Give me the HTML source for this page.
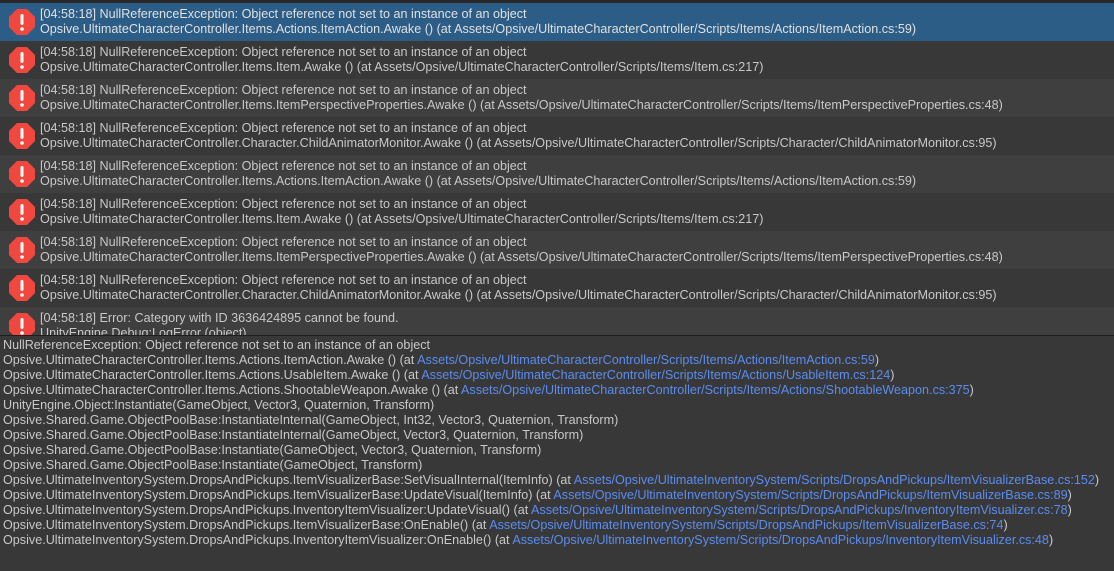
<!DOCTYPE html>
<html><head><style>
body{margin:0;width:1114px;height:571px;background:#383838;overflow:hidden;font-family:"Liberation Sans",sans-serif;font-size:12.6px;color:#c8c8c8}
.top{height:3px;background:#282828}
.row{position:relative;height:38px;}
.row.a{background:#383838}.row.b{background:#3f3f3f}.row.sel{background:#2c5d87;color:#e0e0e0}
.row svg{position:absolute;left:9px;top:6px}
.row .t{position:absolute;left:40px;top:4px;line-height:15px;white-space:nowrap}
.list{height:332px;overflow:hidden}
.div{height:1px;background:#1e1e1e}
.det{padding:2px 0 0 3px;line-height:15px;white-space:nowrap;background:#383838}
a{color:#5a8cf0;text-decoration:none}
</style></head><body>
<div class="top"></div>
<div class="list">
<div class="row sel"><svg width="26" height="26" viewBox="0 0 26 26"><polygon points="8,0 18,0 26,8 26,18 18,26 8,26 0,18 0,8" fill="#f0483e"/><rect x="11.5" y="5" width="3" height="11" rx="1.5" fill="#fff"/><circle cx="13" cy="20" r="1.8" fill="#fff"/></svg><div class="t">[04:58:18] NullReferenceException: Object reference not set to an instance of an object<br>Opsive.UltimateCharacterController.Items.Actions.ItemAction.Awake () (at Assets/Opsive/UltimateCharacterController/Scripts/Items/Actions/ItemAction.cs:59)</div></div>
<div class="row a"><svg width="26" height="26" viewBox="0 0 26 26"><polygon points="8,0 18,0 26,8 26,18 18,26 8,26 0,18 0,8" fill="#f0483e"/><rect x="11.5" y="5" width="3" height="11" rx="1.5" fill="#fff"/><circle cx="13" cy="20" r="1.8" fill="#fff"/></svg><div class="t">[04:58:18] NullReferenceException: Object reference not set to an instance of an object<br>Opsive.UltimateCharacterController.Items.Item.Awake () (at Assets/Opsive/UltimateCharacterController/Scripts/Items/Item.cs:217)</div></div>
<div class="row b"><svg width="26" height="26" viewBox="0 0 26 26"><polygon points="8,0 18,0 26,8 26,18 18,26 8,26 0,18 0,8" fill="#f0483e"/><rect x="11.5" y="5" width="3" height="11" rx="1.5" fill="#fff"/><circle cx="13" cy="20" r="1.8" fill="#fff"/></svg><div class="t">[04:58:18] NullReferenceException: Object reference not set to an instance of an object<br>Opsive.UltimateCharacterController.Items.ItemPerspectiveProperties.Awake () (at Assets/Opsive/UltimateCharacterController/Scripts/Items/ItemPerspectiveProperties.cs:48)</div></div>
<div class="row a"><svg width="26" height="26" viewBox="0 0 26 26"><polygon points="8,0 18,0 26,8 26,18 18,26 8,26 0,18 0,8" fill="#f0483e"/><rect x="11.5" y="5" width="3" height="11" rx="1.5" fill="#fff"/><circle cx="13" cy="20" r="1.8" fill="#fff"/></svg><div class="t">[04:58:18] NullReferenceException: Object reference not set to an instance of an object<br>Opsive.UltimateCharacterController.Character.ChildAnimatorMonitor.Awake () (at Assets/Opsive/UltimateCharacterController/Scripts/Character/ChildAnimatorMonitor.cs:95)</div></div>
<div class="row b"><svg width="26" height="26" viewBox="0 0 26 26"><polygon points="8,0 18,0 26,8 26,18 18,26 8,26 0,18 0,8" fill="#f0483e"/><rect x="11.5" y="5" width="3" height="11" rx="1.5" fill="#fff"/><circle cx="13" cy="20" r="1.8" fill="#fff"/></svg><div class="t">[04:58:18] NullReferenceException: Object reference not set to an instance of an object<br>Opsive.UltimateCharacterController.Items.Actions.ItemAction.Awake () (at Assets/Opsive/UltimateCharacterController/Scripts/Items/Actions/ItemAction.cs:59)</div></div>
<div class="row a"><svg width="26" height="26" viewBox="0 0 26 26"><polygon points="8,0 18,0 26,8 26,18 18,26 8,26 0,18 0,8" fill="#f0483e"/><rect x="11.5" y="5" width="3" height="11" rx="1.5" fill="#fff"/><circle cx="13" cy="20" r="1.8" fill="#fff"/></svg><div class="t">[04:58:18] NullReferenceException: Object reference not set to an instance of an object<br>Opsive.UltimateCharacterController.Items.Item.Awake () (at Assets/Opsive/UltimateCharacterController/Scripts/Items/Item.cs:217)</div></div>
<div class="row b"><svg width="26" height="26" viewBox="0 0 26 26"><polygon points="8,0 18,0 26,8 26,18 18,26 8,26 0,18 0,8" fill="#f0483e"/><rect x="11.5" y="5" width="3" height="11" rx="1.5" fill="#fff"/><circle cx="13" cy="20" r="1.8" fill="#fff"/></svg><div class="t">[04:58:18] NullReferenceException: Object reference not set to an instance of an object<br>Opsive.UltimateCharacterController.Items.ItemPerspectiveProperties.Awake () (at Assets/Opsive/UltimateCharacterController/Scripts/Items/ItemPerspectiveProperties.cs:48)</div></div>
<div class="row a"><svg width="26" height="26" viewBox="0 0 26 26"><polygon points="8,0 18,0 26,8 26,18 18,26 8,26 0,18 0,8" fill="#f0483e"/><rect x="11.5" y="5" width="3" height="11" rx="1.5" fill="#fff"/><circle cx="13" cy="20" r="1.8" fill="#fff"/></svg><div class="t">[04:58:18] NullReferenceException: Object reference not set to an instance of an object<br>Opsive.UltimateCharacterController.Character.ChildAnimatorMonitor.Awake () (at Assets/Opsive/UltimateCharacterController/Scripts/Character/ChildAnimatorMonitor.cs:95)</div></div>
<div class="row b"><svg width="26" height="26" viewBox="0 0 26 26"><polygon points="8,0 18,0 26,8 26,18 18,26 8,26 0,18 0,8" fill="#f0483e"/><rect x="11.5" y="5" width="3" height="11" rx="1.5" fill="#fff"/><circle cx="13" cy="20" r="1.8" fill="#fff"/></svg><div class="t">[04:58:18] Error: Category with ID 3636424895 cannot be found.<br>UnityEngine.Debug:LogError (object)</div></div>
</div>
<div class="div"></div>
<div class="det">NullReferenceException: Object reference not set to an instance of an object<br>
Opsive.UltimateCharacterController.Items.Actions.ItemAction.Awake () (at <a>Assets/Opsive/UltimateCharacterController/Scripts/Items/Actions/ItemAction.cs:59</a>)<br>
Opsive.UltimateCharacterController.Items.Actions.UsableItem.Awake () (at <a>Assets/Opsive/UltimateCharacterController/Scripts/Items/Actions/UsableItem.cs:124</a>)<br>
Opsive.UltimateCharacterController.Items.Actions.ShootableWeapon.Awake () (at <a>Assets/Opsive/UltimateCharacterController/Scripts/Items/Actions/ShootableWeapon.cs:375</a>)<br>
UnityEngine.Object:Instantiate(GameObject, Vector3, Quaternion, Transform)<br>
Opsive.Shared.Game.ObjectPoolBase:InstantiateInternal(GameObject, Int32, Vector3, Quaternion, Transform)<br>
Opsive.Shared.Game.ObjectPoolBase:InstantiateInternal(GameObject, Vector3, Quaternion, Transform)<br>
Opsive.Shared.Game.ObjectPoolBase:Instantiate(GameObject, Vector3, Quaternion, Transform)<br>
Opsive.Shared.Game.ObjectPoolBase:Instantiate(GameObject, Transform)<br>
Opsive.UltimateInventorySystem.DropsAndPickups.ItemVisualizerBase:SetVisualInternal(ItemInfo) (at <a>Assets/Opsive/UltimateInventorySystem/Scripts/DropsAndPickups/ItemVisualizerBase.cs:152</a>)<br>
Opsive.UltimateInventorySystem.DropsAndPickups.ItemVisualizerBase:UpdateVisual(ItemInfo) (at <a>Assets/Opsive/UltimateInventorySystem/Scripts/DropsAndPickups/ItemVisualizerBase.cs:89</a>)<br>
Opsive.UltimateInventorySystem.DropsAndPickups.InventoryItemVisualizer:UpdateVisual() (at <a>Assets/Opsive/UltimateInventorySystem/Scripts/DropsAndPickups/InventoryItemVisualizer.cs:78</a>)<br>
Opsive.UltimateInventorySystem.DropsAndPickups.ItemVisualizerBase:OnEnable() (at <a>Assets/Opsive/UltimateInventorySystem/Scripts/DropsAndPickups/ItemVisualizerBase.cs:74</a>)<br>
Opsive.UltimateInventorySystem.DropsAndPickups.InventoryItemVisualizer:OnEnable() (at <a>Assets/Opsive/UltimateInventorySystem/Scripts/DropsAndPickups/InventoryItemVisualizer.cs:48</a>)
</div>
</body></html>
